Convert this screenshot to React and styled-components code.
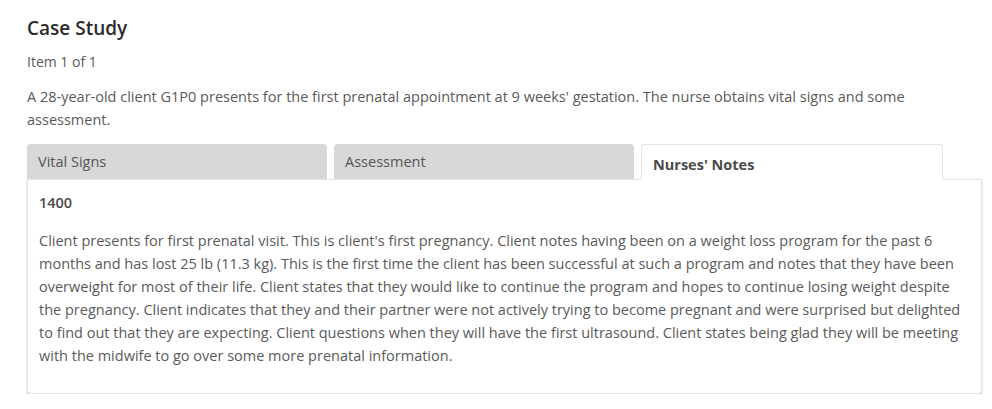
import React, { useState } from 'react';
import styled, { createGlobalStyle } from 'styled-components';

const GlobalStyle = createGlobalStyle`
	body {
		margin: 0;
		background: #fff;
		font-family: "Open Sans", "Liberation Sans", sans-serif;
		color: #555;
	}
`;

const Page = styled.div`
	padding: 14px 10px 0 27px;
	width: 955px;
`;

const Title = styled.h1`
	margin: 0;
	font-size: 19px;
	font-weight: 600;
	color: #2b2b2b;
	line-height: 28px;
`;

const ItemCount = styled.p`
	margin: 10px 0 0;
	font-size: 14px;
	line-height: 20px;
	color: #5a5a5a;
`;

const Intro = styled.p`
	margin: 13px 0 0;
	font-size: 14.5px;
	line-height: 23px;
	color: #5a5a5a;
`;

const Tabs = styled.div`
	display: flex;
	gap: 7px;
	margin-top: 13px;
	align-items: flex-end;
`;

const Tab = styled.button`
	width: ${p => p.$active ? 302 : 300}px;
	height: ${p => p.$active ? 36 : 35}px;
	box-sizing: border-box;
	padding: ${p => p.$active ? 3 : 0}px 0 0 11px;
	text-align: left;
	font-family: inherit;
	font-size: 14.5px;
	font-weight: ${p => p.$active ? 700 : 400};
	color: ${p => p.$active ? '#4a4a4a' : '#555'};
	background: ${p => p.$active ? '#fff' : '#d8d8d8'};
	border: ${p => p.$active ? '1px solid #e4e4e4' : 'none'};
	border-bottom: none;
	border-radius: 4px 4px 0 0;
	margin-bottom: ${p => p.$active ? -1 : 0}px;
	position: relative;
	z-index: 1;
	cursor: pointer;
`;

const Panel = styled.div`
	border: 1px solid #e6e6e6;
	border-radius: 0 0 4px 4px;
	box-shadow: 0 1px 2px rgba(0, 0, 0, 0.28);
	padding: 13px 11px 26px;
	background: #fff;
`;

const Time = styled.div`
	font-size: 14.5px;
	font-weight: 600;
	color: #4a4a4a;
	line-height: 20px;
`;

const Note = styled.p`
	margin: 16px 0 0;
	font-size: 14.5px;
	line-height: 23px;
	color: #5a5a5a;
`;

const tabs = ['Vital Signs', 'Assessment', "Nurses' Notes"];

export default function App() {
	const [active, setActive] = useState(2);

	return (
		<Page>
			<GlobalStyle />
			<Title>Case Study</Title>
			<ItemCount>Item 1 of 1</ItemCount>
			<Intro>
				A 28-year-old client G1P0 presents for the first prenatal appointment at 9 weeks' gestation. The nurse obtains vital signs and some assessment.
			</Intro>
			<Tabs>
				{tabs.map((t, i) => (
					<Tab key={t} $active={i === active} onClick={() => setActive(i)}>{t}</Tab>
				))}
			</Tabs>
			<Panel>
				<Time>1400</Time>
				<Note>
					Client presents for first prenatal visit. This is client's first pregnancy. Client notes having been on a weight loss program for the past 6 months and has lost 25 lb (11.3 kg). This is the first time the client has been successful at such a program and notes that they have been overweight for most of their life. Client states that they would like to continue the program and hopes to continue losing weight despite the pregnancy. Client indicates that they and their partner were not actively trying to become pregnant and were surprised but delighted to find out that they are expecting. Client questions when they will have the first ultrasound. Client states being glad they will be meeting with the midwife to go over some more prenatal information.
				</Note>
			</Panel>
		</Page>
	);
}
